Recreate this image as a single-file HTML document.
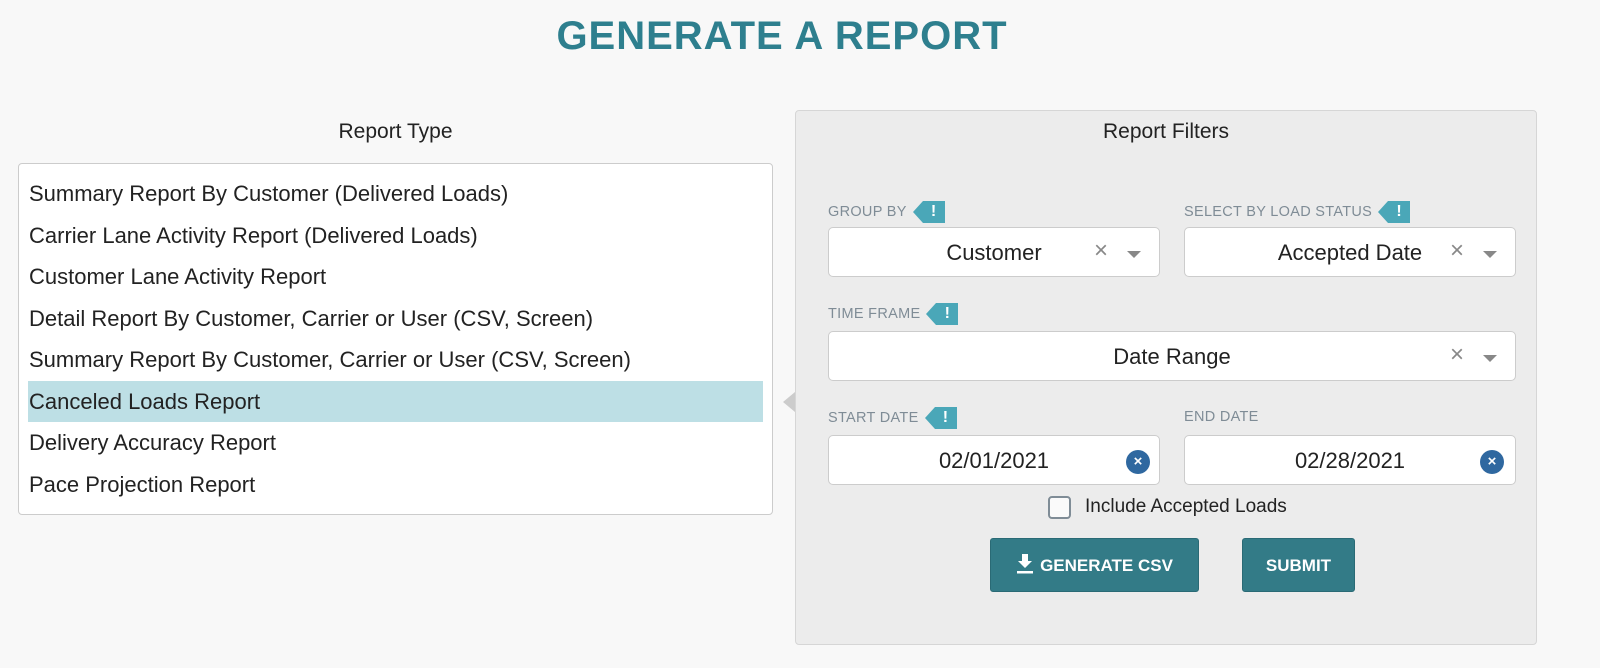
<!DOCTYPE html>
<html><head><style>
*{box-sizing:border-box;margin:0;padding:0}
body{width:1600px;height:668px;background:#f8f8f8;font-family:"Liberation Sans",sans-serif;position:relative;overflow:hidden;color:#222}
.abs{position:absolute}
h1{position:absolute;left:0;width:1564px;top:14px;text-align:center;font-size:40px;font-weight:bold;color:#2e7f8e;letter-spacing:1px}
.lt{left:18px;width:755px;top:120px;text-align:center;font-size:21px}
.list{left:18px;top:163px;width:755px;height:352px;background:#fff;border:1px solid #ccc;border-radius:4px;padding-top:9px}
.list div{height:41.5px;line-height:41.5px;padding-left:1px;font-size:22px;margin:0 9px;}
.list .sel{background:#bddfe5}
.panel{left:795px;top:110px;width:742px;height:535px;background:#ececec;border:1px solid #d6d6d6;border-radius:4px}
.lbl{font-size:14.5px;color:#7f8c96;letter-spacing:.3px}
.tag{display:inline-block;position:relative;width:22px;height:22px;background:#4aa7b8;color:#fff;font-weight:bold;font-size:16px;text-align:center;line-height:22px;vertical-align:middle;margin-left:16px}
.tag:before{content:"";position:absolute;left:-10px;top:0;border-right:10px solid #4aa7b8;border-top:11px solid transparent;border-bottom:11px solid transparent}
.box{background:#fff;border:1px solid #ccc;border-radius:5px;font-size:22px;text-align:center;line-height:50px}
.x{position:absolute;top:0;color:#888;font-size:24px;line-height:46px}
.car{position:absolute;top:23px;border-left:7px solid transparent;border-right:7px solid transparent;border-top:7px solid #888}
.cx{position:absolute;top:14px;width:24px;height:24px;border-radius:50%;background:#2f68a0;color:#fff;font-size:15px;line-height:23px;text-align:center;font-weight:bold}
.btn{background:#337b87;color:#fff;font-weight:bold;font-size:17px;text-align:center;line-height:54px;border-radius:3px;border:1px solid #2a6a75}
</style></head><body>
<h1>GENERATE A REPORT</h1>
<div class="abs lt">Report Type</div>
<div class="abs list">
<div>Summary Report By Customer (Delivered Loads)</div>
<div>Carrier Lane Activity Report (Delivered Loads)</div>
<div>Customer Lane Activity Report</div>
<div>Detail Report By Customer, Carrier or User (CSV, Screen)</div>
<div>Summary Report By Customer, Carrier or User (CSV, Screen)</div>
<div class="sel">Canceled Loads Report</div>
<div>Delivery Accuracy Report</div>
<div>Pace Projection Report</div>
</div>
<div class="abs" style="left:783px;top:392px;border-right:12px solid #ccc;border-top:10px solid transparent;border-bottom:10px solid transparent"></div>
<div class="abs panel"></div>
<div class="abs" style="left:795px;width:742px;top:120px;text-align:center;font-size:21px">Report Filters</div>

<div class="abs lbl" style="left:828px;top:201px">GROUP BY<span class="tag">!</span></div>
<div class="abs lbl" style="left:1184px;top:201px">SELECT BY LOAD STATUS<span class="tag">!</span></div>
<div class="abs box" style="left:828px;top:227px;width:332px;height:50px">Customer<span class="x" style="left:265px">×</span><span class="car" style="left:298px"></span></div>
<div class="abs box" style="left:1184px;top:227px;width:332px;height:50px">Accepted Date<span class="x" style="left:265px">×</span><span class="car" style="left:298px"></span></div>

<div class="abs lbl" style="left:828px;top:303px">TIME FRAME<span class="tag">!</span></div>
<div class="abs box" style="left:828px;top:331px;width:688px;height:50px">Date Range<span class="x" style="left:621px">×</span><span class="car" style="left:654px"></span></div>

<div class="abs lbl" style="left:828px;top:407px">START DATE<span class="tag">!</span></div>
<div class="abs lbl" style="left:1184px;top:409px">END DATE</div>
<div class="abs box" style="left:828px;top:435px;width:332px;height:50px">02/01/2021<span class="cx" style="left:297px">×</span></div>
<div class="abs box" style="left:1184px;top:435px;width:332px;height:50px">02/28/2021<span class="cx" style="left:295px">×</span></div>

<div class="abs" style="left:1048px;top:496px;width:23px;height:23px;border:2px solid #7f8c96;border-radius:4px;background:#fafafa"></div>
<div class="abs" style="left:1085px;top:496px;font-size:19px">Include Accepted Loads</div>

<div class="abs btn" style="left:990px;top:538px;width:209px;height:54px"><svg width="18" height="22" viewBox="0 0 18 22" style="vertical-align:-4px;margin-right:6px"><path d="M6 1h6v7h4l-7 7-7-7h4z" fill="#fff"/><rect x="1" y="18" width="16" height="2.5" fill="#fff"/></svg>GENERATE CSV</div>
<div class="abs btn" style="left:1242px;top:538px;width:113px;height:54px">SUBMIT</div>
</body></html>
